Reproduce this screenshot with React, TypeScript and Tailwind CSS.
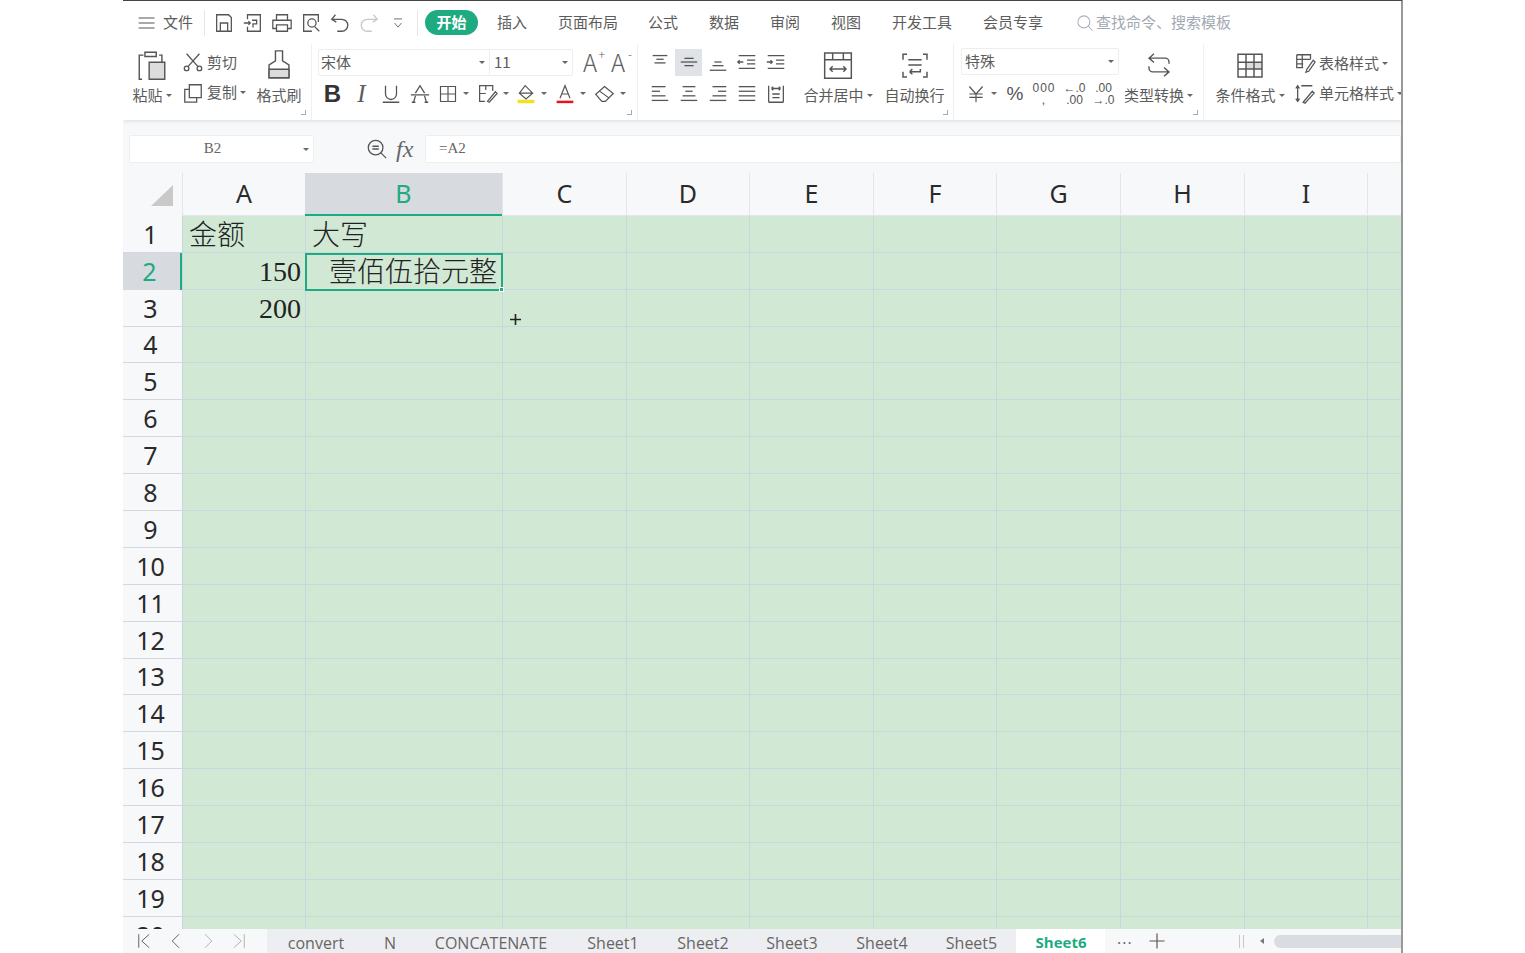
import React from "react";

const columns = ["A", "B", "C", "D", "E", "F", "G", "H", "I", ""];
const rows = Array.from({ length: 20 }, (_, i) => i + 1);
const sheets = [
  { name: "convert", width: "w-[98px]" },
  { name: "N", width: "w-[50px]" },
  { name: "CONCATENATE", width: "w-[152px]" },
  { name: "Sheet1", width: "w-[92px]" },
  { name: "Sheet2", width: "w-[88px]" },
  { name: "Sheet3", width: "w-[90px]" },
  { name: "Sheet4", width: "w-[90px]" },
  { name: "Sheet5", width: "w-[89px]" },
];

const Icon = ({ size = 22, box = 24, children }: { size?: number; box?: number; children: React.ReactNode }) => (
  <svg
    width={size}
    height={size}
    viewBox={`0 0 ${box} ${box}`}
    fill="none"
    stroke="#555"
    strokeWidth="1.4"
    className="shrink-0"
  >
    {children}
  </svg>
);

const Caret = () => (
  <span className="inline-block shrink-0 w-0 h-0 border-l-[3px] border-r-[3px] border-t-[3px] border-l-transparent border-r-transparent border-t-[#666]" />
);

const Corner = () => (
  <span className="absolute right-[5px] bottom-[5px] w-[5px] h-[5px] border-r border-b border-[#aaa]" />
);

const Lines = ({ items }: { items: number[][] }) => (
  <Icon>
    {items.map((l, i) => (
      <path key={i} d={`M${l[0]} ${l[1]}H${l[2]}`} />
    ))}
  </Icon>
);

const Tab = ({ w, children }: { w: string; children: React.ReactNode }) => (
  <span className={`${w} shrink-0 text-center`}>{children}</span>
);

const Cell = ({ w, children, caret }: { w: string; children: React.ReactNode; caret?: boolean }) => (
  <div className={`${w} shrink-0 flex items-center justify-center gap-[5px]`}>
    {children}
    {caret ? <Caret /> : null}
  </div>
);

const BigButton = ({ w, icon, label, caret }: { w: string; icon: React.ReactNode; label: string; caret?: boolean }) => (
  <div className={`${w} shrink-0 flex flex-col items-center`}>
    <div className="h-[36px] flex items-center">{icon}</div>
    <div className="mt-[2px] flex items-center gap-[3px] whitespace-nowrap text-[15px] leading-[20px]">
      {label}
      {caret ? <Caret /> : null}
    </div>
  </div>
);

const App = () => {
  return (
    <div className="h-[953px] w-[1525px] overflow-hidden bg-white font-['Noto_Sans_CJK_SC','Noto_Sans',sans-serif] text-[#5c5c5c]">
      <div className="ml-[123px] w-[1280px] h-full flex flex-col border-t border-t-[#444] border-r-2 border-r-[#999] bg-[#f7f8fa] overflow-hidden">
        {/* top bar */}
        <div className="h-[43px] shrink-0 bg-white flex items-center text-[15px] pl-[14px]">
          <Icon size={20}>
            <path d="M2 6H21M2 12H21M2 18H21" />
          </Icon>
          <span className="ml-[6px] w-[41px]">文件</span>
          <span className="h-[26px] w-px bg-[#e6e6e6]" />
          <div className="ml-[4px] w-[209px] flex items-center">
            <Cell w="w-[29px]">
              <Icon>
                <path d="M4 3H17L20 6V21H4Z M8 21V12H16V21" />
              </Icon>
            </Cell>
            <Cell w="w-[29px]">
              <Icon>
                <path d="M6 8V3H20V21H6V16 M2 12H9M7 10L9 12L7 14 M11 9H16V13H12V17" />
              </Icon>
            </Cell>
            <Cell w="w-[29px]">
              <Icon>
                <path d="M6 9V3H18V9 M6 18H2V9H22V18H18 M6 14H18V21H6Z" />
              </Icon>
            </Cell>
            <Cell w="w-[29px]">
              <Icon>
                <path d="M20 11V3H4V21H13" />
                <circle cx="13" cy="12" r="4.5" />
                <path d="M16 16L21 21" />
              </Icon>
            </Cell>
            <Cell w="w-[29px]">
              <Icon>
                <path d="M7 3L3 8L8 11 M3 8H14A6.5 6.5 0 0 1 14 21H9" />
              </Icon>
            </Cell>
            <Cell w="w-[29px]">
              <Icon>
                <g stroke="#c8c8c8">
                  <path d="M17 3L21 8L16 11 M21 8H10A6.5 6.5 0 0 0 10 21H15" />
                </g>
              </Icon>
            </Cell>
            <Cell w="w-[29px]">
              <Icon size={14}>
                <path d="M5 5H19M6 12L12 19L18 12" />
              </Icon>
            </Cell>
          </div>
          <span className="h-[26px] w-px bg-[#e6e6e6] ml-[-1px]" />
          <span className="ml-[7px] w-[53px] h-[25px] rounded-full bg-[#1fab82] text-white font-semibold flex items-center justify-center">
            开始
          </span>
          <div className="ml-[19px] flex items-center">
            <span className="w-[61px]">插入</span>
            <span className="w-[90px]">页面布局</span>
            <span className="w-[61px]">公式</span>
            <span className="w-[61px]">数据</span>
            <span className="w-[61px]">审阅</span>
            <span className="w-[61px]">视图</span>
            <span className="w-[91px]">开发工具</span>
            <span className="w-[93px]">会员专享</span>
            <Icon size={18}>
              <g stroke="#a9b0ba">
                <circle cx="10.5" cy="10.5" r="8" />
                <path d="M16 16L22 22" />
              </g>
            </Icon>
            <span className="ml-[2px] text-[#a3a9b3] whitespace-nowrap">查找命令、搜索模板</span>
          </div>
        </div>

        {/* ribbon */}
        <div className="h-[76px] shrink-0 bg-white flex shadow-[0_2px_3px_rgba(0,0,0,0.08)] z-10">
          {/* clipboard */}
          <div className="relative w-[189px] shrink-0 border-r border-[#f0f0f0] flex pl-[9px] pt-[3px]">
            <BigButton
              w="w-[40px]"
              caret
              label="粘贴"
              icon={
                <Icon size={34}>
                  <path d="M17 5H19V10 M5 22H3V5H6 M7 3H15V6H7Z" strokeWidth="1" />
                  <path d="M10 10H21V22H10Z" fill="#dcdcdc" strokeWidth="1" />
                </Icon>
              }
            />
            <div className="ml-[10px] w-[72px] shrink-0 flex flex-col text-[15px] whitespace-nowrap">
              <div className="h-[30px] flex items-center gap-[3px]">
                <Icon size={22}>
                  <circle cx="5" cy="19" r="2.5" />
                  <circle cx="19" cy="19" r="2.5" />
                  <path d="M6.5 17L19 3M17.5 17L5 3" />
                </Icon>
                剪切
              </div>
              <div className="h-[31px] flex items-center gap-[3px]">
                <Icon size={22}>
                  <path d="M8 3H21V17H8Z M8 8H3V22H16V17" />
                </Icon>
                复制
                <Caret />
              </div>
            </div>
            <div className="ml-[2px]">
              <BigButton
                w="w-[46px]"
                label="格式刷"
                icon={
                  <Icon size={34}>
                    <path d="M9.5 2H14.5V9L19 12V21H5V12L9.5 9Z" strokeWidth="1" />
                    <path d="M5 15H19V21H5Z" fill="#dcdcdc" strokeWidth="1" />
                  </Icon>
                }
              />
            </div>
            <Corner />
          </div>

          {/* font */}
          <div className="relative w-[326px] shrink-0 border-r border-[#f0f0f0] pl-[6px] pt-[4px] flex flex-col">
            <div className="flex items-center h-[28px]">
              <div className="w-[172px] h-[27px] border border-[#eee] rounded-l-[2px] flex items-center justify-between pl-[2px] pr-[4px] text-[15px]">
                宋体
                <Caret />
              </div>
              <div className="w-[83px] h-[27px] border border-l-0 border-[#eee] rounded-r-[2px] flex items-center justify-between pl-[4px] pr-[4px] text-[15px]">
                11
                <Caret />
              </div>
              <span className="w-[34px] text-center text-[24px] font-light leading-none relative">
                A<span className="absolute top-[-2px] right-[2px] text-[12px]">+</span>
              </span>
              <span className="w-[22px] text-center text-[24px] font-light leading-none relative">
                A<span className="absolute top-[-2px] right-[-3px] text-[12px]">-</span>
              </span>
            </div>
            <div className="flex items-center h-[33px] mt-[1px]">
              <Cell w="w-[29px]">
                <span className="font-['Liberation_Sans'] font-bold text-[24px] leading-none text-[#333]">B</span>
              </Cell>
              <Cell w="w-[29px]">
                <span className="font-['Liberation_Serif'] italic text-[25px] leading-none">I</span>
              </Cell>
              <Cell w="w-[29px]">
                <Icon size={22}>
                  <path d="M6 3V12A6 6 0 0 0 18 12V3 M3 21H21" />
                </Icon>
              </Cell>
              <Cell w="w-[29px]">
                <Icon size={22}>
                  <path d="M7 11L12 3L17 11 M2 13H22 M7 14L5 21 M17 14L19 21 M3 21H7 M17 21H21" />
                </Icon>
              </Cell>
              <Cell w="w-[39px]" caret>
                <Icon size={20}>
                  <path d="M3 3H21V21H3Z M3 12H21 M12 3V21" />
                </Icon>
              </Cell>
              <Cell w="w-[39px]" caret>
                <Icon size={21}>
                  <path d="M18 9V3H3V21H9 M3 12H10 M10 3V8 M12 21L21 10L23 12L14 22Z" />
                </Icon>
              </Cell>
              <Cell w="w-[39px]" caret>
                <svg width="20" height="20" viewBox="0 0 24 24" fill="none" stroke="#555" strokeWidth="1.4" className="shrink-0">
                  <path d="M11 2L20 11L12 18L4 11Z M4 11H20" />
                  <path d="M2 19H22V23H2Z" fill="#f2e21a" stroke="none" />
                </svg>
              </Cell>
              <Cell w="w-[39px]" caret>
                <svg width="20" height="20" viewBox="0 0 24 24" fill="none" stroke="#555" strokeWidth="1.4" className="shrink-0">
                  <path d="M6 17L12 2L18 17 M8 12H16" />
                  <path d="M2 20H22V23H2Z" fill="#e8121b" stroke="none" />
                </svg>
              </Cell>
              <Cell w="w-[39px]" caret>
                <Icon size={21}>
                  <path d="M12 4L22 12L13 21H9L2 13Z M6 9L17 17" />
                </Icon>
              </Cell>
            </div>
            <Corner />
          </div>

          {/* alignment */}
          <div className="relative w-[316px] shrink-0 border-r border-[#f0f0f0] flex pl-[7px] pt-[3px]">
            <div className="w-[146px] shrink-0 flex flex-col pt-[1px]">
              <div className="flex items-center h-[28px]">
                <Cell w="w-[29px]">
                  <Lines items={[[4, 5, 20], [8, 9, 16], [6, 13, 18]]} />
                </Cell>
                <Cell w="w-[29px]">
                  <div className="w-[27px] h-[27px] bg-[#dfe3e7] flex items-center justify-center">
                    <Lines items={[[7, 8, 17], [3, 12, 21], [7, 16, 17]]} />
                  </div>
                </Cell>
                <Cell w="w-[29px]">
                  <Lines items={[[8, 12, 16], [6, 16, 18], [3, 21, 21]]} />
                </Cell>
                <Cell w="w-[29px]">
                  <Icon>
                    <path d="M3 5H21M12 10H21M12 14H21M3 19H21 M8 12H2M4 10L2 12L4 14" />
                  </Icon>
                </Cell>
                <Cell w="w-[30px]">
                  <Icon>
                    <path d="M3 5H21M12 10H21M12 14H21M3 19H21 M2 12H8M6 10L8 12L6 14" />
                  </Icon>
                </Cell>
              </div>
              <div className="flex items-center h-[33px] mt-[1px]">
                <Cell w="w-[29px]">
                  <Lines items={[[3, 4, 18], [3, 9, 12], [3, 14, 18], [3, 19, 21]]} />
                </Cell>
                <Cell w="w-[29px]">
                  <Lines items={[[5, 4, 19], [8, 9, 16], [5, 14, 19], [3, 19, 21]]} />
                </Cell>
                <Cell w="w-[29px]">
                  <Lines items={[[6, 4, 21], [12, 9, 21], [6, 14, 21], [3, 19, 21]]} />
                </Cell>
                <Cell w="w-[29px]">
                  <Lines items={[[3, 4, 21], [3, 9, 21], [3, 14, 21], [3, 19, 21]]} />
                </Cell>
                <Cell w="w-[30px]">
                  <Icon>
                    <path d="M4 3V21 M20 3V21 M4 21H20 M7 6H17M7 6L9 4M7 6L9 8M17 6L15 4M17 6L15 8 M8 12H16M8 16H16" />
                  </Icon>
                </Cell>
              </div>
            </div>
            <div className="ml-[7px]">
              <BigButton
                w="w-[80px]"
                caret
                label="合并居中"
                icon={
                  <Icon size={32}>
                    <path d="M2 3H22V22H2Z M2 8H22 M8 3V8 M16 3V8 M6 15H18 M8 13L6 15L8 17 M16 13L18 15L16 17" strokeWidth="1.1" />
                  </Icon>
                }
              />
            </div>
            <BigButton
              w="w-[73px]"
              label="自动换行"
              icon={
                <Icon size={32}>
                  <path d="M6 4H3V8 M18 4H21V8 M6 21H3V17 M18 21H21V17 M7 8H17 M7 12H17 M8 17H16V15 M8 17L10 15M8 17L10 19" strokeWidth="1.1" />
                </Icon>
              }
            />
            <Corner />
          </div>

          {/* number */}
          <div className="relative w-[250px] shrink-0 border-r border-[#f0f0f0] flex pl-[7px] pt-[3px]">
            <div className="w-[158px] shrink-0 flex flex-col pt-[1px]">
              <div className="h-[28px]">
                <div className="w-[158px] h-[27px] border border-[#eee] rounded-[2px] flex items-center justify-between pl-[3px] pr-[4px] text-[15px]">
                  特殊
                  <Caret />
                </div>
              </div>
              <div className="flex items-center h-[33px] mt-[1px] text-[#555]">
                <Cell w="w-[41px]" caret>
                  <Icon size={20}>
                    <path d="M4 3L12 12L20 3 M12 12V22 M4 12H20 M4 16H20" />
                  </Icon>
                </Cell>
                <Cell w="w-[26px]">
                  <span className="font-['Liberation_Sans'] text-[19px] leading-none">%</span>
                </Cell>
                <Cell w="w-[32px]">
                  <span className="font-['Liberation_Sans'] text-[12px] leading-[12px] text-center tracking-[1px]">
                    000
                    <br />,
                  </span>
                </Cell>
                <Cell w="w-[29px]">
                  <span className="font-['Liberation_Sans'] text-[12px] leading-[12px] text-center">
                    ←.0
                    <br />.00
                  </span>
                </Cell>
                <Cell w="w-[29px]">
                  <span className="font-['Liberation_Sans'] text-[12px] leading-[12px] text-center">
                    .00
                    <br />→.0
                  </span>
                </Cell>
              </div>
            </div>
            <BigButton
              w="w-[79px]"
              caret
              label="类型转换"
              icon={
                <Icon size={30}>
                  <path d="M8 3L4 6.5L8 10 M4 6.5H17A3 3 0 0 1 20 9.5V11 M16 14L20 17.5L16 21 M20 17.5H7A3 3 0 0 1 4 14.5V13" strokeWidth="1.1" />
                </Icon>
              }
            />
            <Corner />
          </div>

          {/* styles */}
          <div className="w-[198px] shrink-0 flex pl-[10px] pt-[3px] overflow-hidden">
            <BigButton
              w="w-[72px]"
              caret
              label="条件格式"
              icon={
                <Icon size={32}>
                  <path d="M9 10H21V15H9Z" fill="#dcdcdc" stroke="none" />
                  <path d="M3 4H21V21H3Z M3 10H21 M3 15H21 M9 4V21 M15 4V21" strokeWidth="1.1" />
                </Icon>
              }
            />
            <div className="ml-[8px] mt-[1px] flex flex-col text-[15px] whitespace-nowrap">
              <div className="h-[30px] flex items-center gap-[3px]">
                <Icon size={22}>
                  <path d="M3 3H18V8 M3 3V17H10 M3 8H18 M3 13H10 M9 3V17 M14 19L21 9L23 11L16 21L13 22Z" />
                </Icon>
                表格样式
                <Caret />
              </div>
              <div className="h-[31px] flex items-center gap-[3px]">
                <Icon size={22}>
                  <path d="M8 3H20 M4 4V20 M2 17L4 20L6 17 M2 6L4 3L6 6 M10 21L20 9L22 11L12 22Z" />
                </Icon>
                单元格样式
                <Caret />
              </div>
            </div>
          </div>
        </div>

        {/* formula bar */}
        <div className="h-[53px] shrink-0 flex items-center pt-[5px] pl-[6px] font-['Liberation_Serif','Noto_Sans_CJK_SC',serif] text-[15px] text-[#666]">
          <div className="w-[185px] h-[28px] bg-white border border-[#eceef0] rounded-[2px] flex items-center pr-[4px]">
            <span className="flex-1 text-center pr-[8px] pb-[1px]">B2</span>
            <Caret />
          </div>
          <div className="ml-[52px] flex items-center gap-[8px]">
            <Icon size={22}>
              <circle cx="10.5" cy="10.5" r="8" />
              <path d="M16 16L22 22 M7 9H14 M7 12H14" />
            </Icon>
            <span className="w-[22px] italic text-[24px] leading-none text-[#666]">fx</span>
          </div>
          <div className="ml-[7px] flex-1 h-[28px] bg-white border border-[#eceef0] rounded-[2px] flex items-center pl-[13px] pb-[1px]">
            =A2
          </div>
        </div>

        {/* column headers */}
        <div className="h-[43px] shrink-0 grid grid-cols-[59px_123px_197px_124px_123px_124px_123px_124px_124px_123px_1fr] text-[25px] font-['Noto_Sans',sans-serif] text-[#2a2a2a]">
          <div className="flex items-end justify-end pr-[9px] pb-[10px]">
            <div className="w-0 h-0 border-b-[21px] border-l-[22px] border-b-[#c9c9c9] border-l-transparent" />
          </div>
          {columns.map((c) =>
            c === "B" ? (
              <div key={c} className="bg-[#d7dade] border-b-2 border-[#1fab82] text-[#1fab82] flex items-center justify-center">
                {c}
              </div>
            ) : (
              <div key={c} className="border-l border-b border-[#e3e5e8] flex items-center justify-center">
                {c}
              </div>
            )
          )}
        </div>

        {/* sheet */}
        <div className="flex-1 min-h-0 overflow-hidden relative">
          {rows.map((r) => (
            <div
              key={r}
              className={`${r === 4 || r === 13 ? "h-[36px]" : "h-[37px]"} grid grid-cols-[59px_123px_197px_124px_123px_124px_123px_124px_124px_123px_1fr] font-['Liberation_Serif','Noto_Sans_CJK_SC',serif] font-light text-[28px] leading-none text-[#222]`}
            >
              <div
                className={
                  r === 2
                    ? "bg-[#d7dade] border-r-2 border-[#1fab82] text-[#1fab82] flex items-center justify-center pr-[4px] font-['Noto_Sans',sans-serif] font-normal text-[25px] leading-none"
                    : "border-b border-[#d3d8de] text-[#2a2a2a] flex items-center justify-center pr-[4px] font-['Noto_Sans',sans-serif] font-normal text-[25px] leading-none"
                }
              >
                {r}
              </div>
              {columns.map((c) => (
                <div
                  key={c}
                  className="bg-[#d1e8d5] border-l border-b border-[#c8d6de] flex items-center overflow-visible whitespace-nowrap pt-[1px]"
                >
                  {c === "A" && r === 1 ? <span className="pl-[6px] pt-[3px]">金额</span> : null}
                  {c === "B" && r === 1 ? <span className="pl-[6px] pt-[3px]">大写</span> : null}
                  {c === "A" && r === 2 ? <span className="ml-auto pr-[4px]">150</span> : null}
                  {c === "A" && r === 3 ? <span className="ml-auto pr-[4px]">200</span> : null}
                </div>
              ))}
            </div>
          ))}
          {/* active cell */}
          <div className="absolute left-[182px] top-[37px] w-[198px] h-[38px] border-2 border-[#1fab82] flex items-center justify-end pr-[4px] pt-[2px] font-['Liberation_Serif','Noto_Sans_CJK_SC',serif] font-light text-[28px] leading-none text-[#222] whitespace-nowrap">
            壹佰伍拾元整
            <span className="absolute right-[-3px] bottom-[-3px] w-[5px] h-[5px] bg-[#1fab82] border border-white" />
          </div>
          {/* mouse cursor */}
          <svg width="13" height="13" viewBox="0 0 13 13" stroke="#222" strokeWidth="1.6" className="absolute left-[386px] top-[97px]">
            <path d="M6.5 1V12M1 6.5H12" />
          </svg>
        </div>

        {/* sheet tabs */}
        <div className="h-[24px] shrink-0 flex items-center font-['Open_Sans','Noto_Sans',sans-serif] text-[16px] leading-none text-[#666]">
          <div className="w-[144px] shrink-0 h-full flex items-center pl-[12px]">
            <Tab w="w-[32px]">
              <Icon size={18}>
                <path d="M5 3V21 M19 3L9 12L19 21" strokeWidth="1.2" />
              </Icon>
            </Tab>
            <Tab w="w-[32px]">
              <Icon size={18}>
                <path d="M16 3L7 12L16 21" strokeWidth="1.2" />
              </Icon>
            </Tab>
            <Tab w="w-[31px]">
              <Icon size={18}>
                <g stroke="#aaa">
                  <path d="M8 3L17 12L8 21" strokeWidth="1.2" />
                </g>
              </Icon>
            </Tab>
            <Tab w="w-[31px]">
              <Icon size={18}>
                <g stroke="#aaa">
                  <path d="M19 3V21 M5 3L15 12L5 21" strokeWidth="1.2" />
                </g>
              </Icon>
            </Tab>
          </div>
          <div className="h-full flex items-center bg-[#edeef1]">
            {sheets.map((s) => (
              <span key={s.name} className={`${s.width} text-center pt-[3px] whitespace-nowrap`}>
                {s.name}
              </span>
            ))}
          </div>
          <div className="w-[89px] h-full bg-white flex items-center justify-center pt-[3px] pl-[1px] text-[15px] font-bold text-[#1fab82]">
            Sheet6
          </div>
          <div className="w-[140px] shrink-0 h-full flex items-center pl-[12px] gap-[14px]">
            <span className="text-[16px] leading-none tracking-[1px] pb-[6px]">...</span>
            <Icon size={20}>
              <path d="M12 3V21M3 12H21" />
            </Icon>
            <span className="ml-auto mr-[1px] w-[5px] h-[13px] border-x border-[#c8c8c8]" />
          </div>
          <div className="flex-1 h-full flex items-center pl-[15px]">
            <span className="w-0 h-0 border-y-[3px] border-r-[4px] border-y-transparent border-r-[#777]" />
            <div className="ml-[10px] flex-1 h-[13px] rounded-l-full bg-[#d9dce0]" />
          </div>
        </div>
      </div>
    </div>
  );
};

export default App;
